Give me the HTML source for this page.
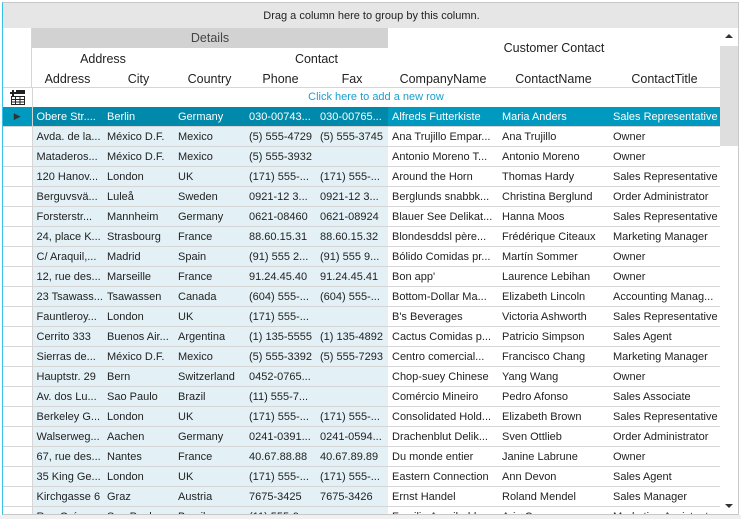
<!DOCTYPE html><html><head><style>
body{margin:0;width:741px;height:519px;overflow:hidden;background:#fff;font-family:"Liberation Sans",sans-serif;position:relative}
.frame{position:absolute;left:2px;top:2px;width:737px;height:513px;border:1px solid #c8c8c8;border-left:1px solid #35c2e8;box-sizing:border-box;overflow:hidden;background:#fff}
.grp{position:absolute;left:0;top:0;width:737px;height:25px;background:#e6e6e6;font-size:11px;text-align:center;line-height:26px;color:#222}
.h{position:absolute;font-size:12.5px;color:#222;text-align:center}
table{position:absolute;left:0;top:104px;border-collapse:collapse;table-layout:fixed;font-size:11px;color:#222}
td{height:19px;border-bottom:1px solid #d6d6d6;padding:0 0 0 4px;white-space:nowrap;overflow:hidden}
td.i{border-right:1px solid #d6d6d6;padding:0}
td.d{background:#e3f1f6}
tr.s td{background:#0099bf;color:#fff}
tr.s td.d{background:#0089aa}
.sb{position:absolute;left:717px;top:25px;width:19px;height:488px;background:#fff}
</style></head><body><div class="frame">
<div class="grp">Drag a column here to group by this column.</div>
<div style="position:absolute;left:29px;top:25px;width:356px;height:20px;background:#d2d2d2;font-size:12.5px;text-align:center;line-height:21px;color:#444">Details</div>
<div class="h" style="left:29px;top:49px;width:142px">Address</div>
<div class="h" style="left:242px;top:49px;width:143px">Contact</div>
<div class="h" style="left:385px;top:38px;width:332px">Customer Contact</div>
<div class="h" style="left:29px;top:69px;width:71px">Address</div>
<div class="h" style="left:100px;top:69px;width:71px">City</div>
<div class="h" style="left:171px;top:69px;width:71px">Country</div>
<div class="h" style="left:242px;top:69px;width:71px">Phone</div>
<div class="h" style="left:313px;top:69px;width:72px">Fax</div>
<div class="h" style="left:385px;top:69px;width:110px">CompanyName</div>
<div class="h" style="left:495px;top:69px;width:111px">ContactName</div>
<div class="h" style="left:606px;top:69px;width:111px">ContactTitle</div>
<div style="position:absolute;left:0;top:84px;width:717px;border-top:1px solid #d6d6d6;height:19px;border-bottom:1px solid #d6d6d6"></div>
<div style="position:absolute;left:29px;top:84px;width:1px;height:20px;background:#d6d6d6"></div>
<div style="position:absolute;left:0;top:25px;width:29px;height:60px;border-right:1px solid #d6d6d6;box-sizing:border-box"></div>
<svg style="position:absolute;left:7px;top:86px" width="16" height="16"><path d="M3 1v6M0 4h6" stroke="#222" stroke-width="2"/><rect x="6" y="1" width="9" height="4" fill="#222"/><path d="M1.5 7.5h13v8h-13zM1.5 10.5h13M1.5 13h13M5.5 7.5v8M10 7.5v8" stroke="#222" fill="none"/></svg>
<div style="position:absolute;left:29px;top:88px;width:688px;text-align:center;font-size:11px;color:#1a9fd0">Click here to add a new row</div>
<table>
<colgroup><col style="width:29px"><col style="width:71px"><col style="width:71px"><col style="width:71px"><col style="width:71px"><col style="width:72px"><col style="width:110px"><col style="width:111px"><col style="width:111px"></colgroup>
<tr class="s"><td class="i" style="color:#333;font-size:9px;text-align:center">▶</td><td class="d">Obere Str....</td><td class="d">Berlin</td><td class="d">Germany</td><td class="d">030-00743...</td><td class="d">030-00765...</td><td>Alfreds Futterkiste</td><td>Maria Anders</td><td>Sales Representative</td></tr>
<tr><td class="i"></td><td class="d">Avda. de la...</td><td class="d">México D.F.</td><td class="d">Mexico</td><td class="d">(5) 555-4729</td><td class="d">(5) 555-3745</td><td>Ana Trujillo Empar...</td><td>Ana Trujillo</td><td>Owner</td></tr>
<tr><td class="i"></td><td class="d">Mataderos...</td><td class="d">México D.F.</td><td class="d">Mexico</td><td class="d">(5) 555-3932</td><td class="d"></td><td>Antonio Moreno T...</td><td>Antonio Moreno</td><td>Owner</td></tr>
<tr><td class="i"></td><td class="d">120 Hanov...</td><td class="d">London</td><td class="d">UK</td><td class="d">(171) 555-...</td><td class="d">(171) 555-...</td><td>Around the Horn</td><td>Thomas Hardy</td><td>Sales Representative</td></tr>
<tr><td class="i"></td><td class="d">Berguvsvä...</td><td class="d">Luleå</td><td class="d">Sweden</td><td class="d">0921-12 3...</td><td class="d">0921-12 3...</td><td>Berglunds snabbk...</td><td>Christina Berglund</td><td>Order Administrator</td></tr>
<tr><td class="i"></td><td class="d">Forsterstr...</td><td class="d">Mannheim</td><td class="d">Germany</td><td class="d">0621-08460</td><td class="d">0621-08924</td><td>Blauer See Delikat...</td><td>Hanna Moos</td><td>Sales Representative</td></tr>
<tr><td class="i"></td><td class="d">24, place K...</td><td class="d">Strasbourg</td><td class="d">France</td><td class="d">88.60.15.31</td><td class="d">88.60.15.32</td><td>Blondesddsl père...</td><td>Frédérique Citeaux</td><td>Marketing Manager</td></tr>
<tr><td class="i"></td><td class="d">C/ Araquil,...</td><td class="d">Madrid</td><td class="d">Spain</td><td class="d">(91) 555 2...</td><td class="d">(91) 555 9...</td><td>Bólido Comidas pr...</td><td>Martín Sommer</td><td>Owner</td></tr>
<tr><td class="i"></td><td class="d">12, rue des...</td><td class="d">Marseille</td><td class="d">France</td><td class="d">91.24.45.40</td><td class="d">91.24.45.41</td><td>Bon app'</td><td>Laurence Lebihan</td><td>Owner</td></tr>
<tr><td class="i"></td><td class="d">23 Tsawass...</td><td class="d">Tsawassen</td><td class="d">Canada</td><td class="d">(604) 555-...</td><td class="d">(604) 555-...</td><td>Bottom-Dollar Ma...</td><td>Elizabeth Lincoln</td><td>Accounting Manag...</td></tr>
<tr><td class="i"></td><td class="d">Fauntleroy...</td><td class="d">London</td><td class="d">UK</td><td class="d">(171) 555-...</td><td class="d"></td><td>B's Beverages</td><td>Victoria Ashworth</td><td>Sales Representative</td></tr>
<tr><td class="i"></td><td class="d">Cerrito 333</td><td class="d">Buenos Air...</td><td class="d">Argentina</td><td class="d">(1) 135-5555</td><td class="d">(1) 135-4892</td><td>Cactus Comidas p...</td><td>Patricio Simpson</td><td>Sales Agent</td></tr>
<tr><td class="i"></td><td class="d">Sierras de...</td><td class="d">México D.F.</td><td class="d">Mexico</td><td class="d">(5) 555-3392</td><td class="d">(5) 555-7293</td><td>Centro comercial...</td><td>Francisco Chang</td><td>Marketing Manager</td></tr>
<tr><td class="i"></td><td class="d">Hauptstr. 29</td><td class="d">Bern</td><td class="d">Switzerland</td><td class="d">0452-0765...</td><td class="d"></td><td>Chop-suey Chinese</td><td>Yang Wang</td><td>Owner</td></tr>
<tr><td class="i"></td><td class="d">Av. dos Lu...</td><td class="d">Sao Paulo</td><td class="d">Brazil</td><td class="d">(11) 555-7...</td><td class="d"></td><td>Comércio Mineiro</td><td>Pedro Afonso</td><td>Sales Associate</td></tr>
<tr><td class="i"></td><td class="d">Berkeley G...</td><td class="d">London</td><td class="d">UK</td><td class="d">(171) 555-...</td><td class="d">(171) 555-...</td><td>Consolidated Hold...</td><td>Elizabeth Brown</td><td>Sales Representative</td></tr>
<tr><td class="i"></td><td class="d">Walserweg...</td><td class="d">Aachen</td><td class="d">Germany</td><td class="d">0241-0391...</td><td class="d">0241-0594...</td><td>Drachenblut Delik...</td><td>Sven Ottlieb</td><td>Order Administrator</td></tr>
<tr><td class="i"></td><td class="d">67, rue des...</td><td class="d">Nantes</td><td class="d">France</td><td class="d">40.67.88.88</td><td class="d">40.67.89.89</td><td>Du monde entier</td><td>Janine Labrune</td><td>Owner</td></tr>
<tr><td class="i"></td><td class="d">35 King Ge...</td><td class="d">London</td><td class="d">UK</td><td class="d">(171) 555-...</td><td class="d">(171) 555-...</td><td>Eastern Connection</td><td>Ann Devon</td><td>Sales Agent</td></tr>
<tr><td class="i"></td><td class="d">Kirchgasse 6</td><td class="d">Graz</td><td class="d">Austria</td><td class="d">7675-3425</td><td class="d">7675-3426</td><td>Ernst Handel</td><td>Roland Mendel</td><td>Sales Manager</td></tr>
<tr><td class="i"></td><td class="d">Rua Orós...</td><td class="d">Sao Paulo</td><td class="d">Brazil</td><td class="d">(11) 555-9...</td><td class="d"></td><td>Familia Arquibaldo</td><td>Aria Cruz</td><td>Marketing Assistant</td></tr>
</table>
<div class="sb"><div style="position:absolute;left:0;top:18px;width:19px;height:100px;background:#dedede"></div>
<div style="position:absolute;left:5px;top:6px;width:0;height:0;border-left:4px solid transparent;border-right:4px solid transparent;border-bottom:4px solid #333"></div>
<div style="position:absolute;left:5px;top:476px;width:0;height:0;border-left:4px solid transparent;border-right:4px solid transparent;border-top:4px solid #333"></div></div>
</div>
<div style="position:absolute;left:0;top:515px;width:741px;height:4px;background:#f0f0f0"></div>
</body></html>
